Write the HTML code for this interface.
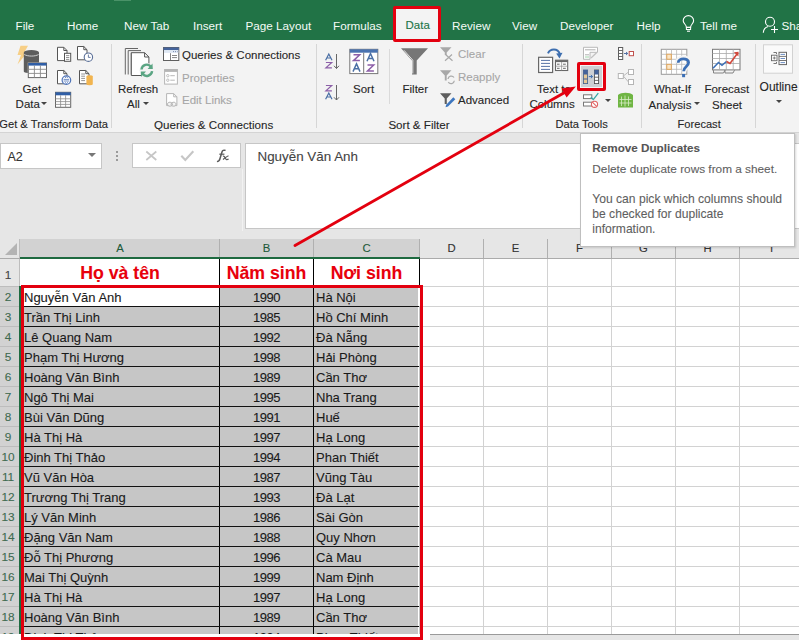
<!DOCTYPE html>
<html><head><meta charset="utf-8"><style>
html,body{margin:0;padding:0;width:799px;height:640px;overflow:hidden;background:#fff;position:relative}
.t{position:absolute;line-height:1;white-space:nowrap;font-family:"Liberation Sans", sans-serif;-webkit-text-stroke:0.1px currentColor}
svg{overflow:visible}
</style></head><body>
<div style="position:absolute;left:0px;top:0px;width:799px;height:40px;background:#217346"></div><div style="position:absolute;left:394px;top:7px;width:46px;height:35px;background:#f3f3f3"></div><div style="position:absolute;left:114px;top:0px;width:17px;height:1px;background:#4a9268"></div><div class="t" style="left:15.5px;top:19.8px;font-size:11.7px;color:#f4fbf6;font-weight:400;-webkit-text-stroke:0">File</div><div class="t" style="left:67.0px;top:19.8px;font-size:11.7px;color:#f4fbf6;font-weight:400;-webkit-text-stroke:0">Home</div><div class="t" style="left:124.0px;top:19.8px;font-size:11.7px;color:#f4fbf6;font-weight:400;-webkit-text-stroke:0">New Tab</div><div class="t" style="left:193.0px;top:19.8px;font-size:11.7px;color:#f4fbf6;font-weight:400;-webkit-text-stroke:0">Insert</div><div class="t" style="left:245.5px;top:19.8px;font-size:11.7px;color:#f4fbf6;font-weight:400;-webkit-text-stroke:0">Page Layout</div><div class="t" style="left:333.0px;top:19.8px;font-size:11.7px;color:#f4fbf6;font-weight:400;-webkit-text-stroke:0">Formulas</div><div class="t" style="left:452.0px;top:19.8px;font-size:11.7px;color:#f4fbf6;font-weight:400;-webkit-text-stroke:0">Review</div><div class="t" style="left:512.0px;top:19.8px;font-size:11.7px;color:#f4fbf6;font-weight:400;-webkit-text-stroke:0">View</div><div class="t" style="left:560.0px;top:19.8px;font-size:11.7px;color:#f4fbf6;font-weight:400;-webkit-text-stroke:0">Developer</div><div class="t" style="left:636.5px;top:19.8px;font-size:11.7px;color:#f4fbf6;font-weight:400;-webkit-text-stroke:0">Help</div><div class="t" style="left:700.0px;top:19.8px;font-size:11.7px;color:#f4fbf6;font-weight:400;-webkit-text-stroke:0">Tell me</div><div class="t" style="left:781.5px;top:19.8px;font-size:11.7px;color:#f4fbf6;font-weight:400;-webkit-text-stroke:0">Share</div><div class="t" style="left:405.5px;top:20.0px;font-size:11.5px;color:#217346;font-weight:400;">Data</div><div style="position:absolute;left:0px;top:40px;width:799px;height:92px;background:#f3f3f3"></div><div style="position:absolute;left:0px;top:132px;width:799px;height:1px;background:#d4d4d4"></div><div style="position:absolute;left:111px;top:44px;width:1px;height:84px;background:#d6d6d6"></div><div style="position:absolute;left:316px;top:44px;width:1px;height:84px;background:#d6d6d6"></div><div style="position:absolute;left:522px;top:44px;width:1px;height:84px;background:#d6d6d6"></div><div style="position:absolute;left:641px;top:44px;width:1px;height:84px;background:#d6d6d6"></div><div style="position:absolute;left:755px;top:44px;width:1px;height:84px;background:#d6d6d6"></div><div style="position:absolute;left:389px;top:49px;width:1px;height:55px;background:#dadada"></div><div class="t" style="left:22.6px;top:83.7px;font-size:11.5px;color:#262626;font-weight:400;">Get</div><div class="t" style="left:15.6px;top:99.0px;font-size:11.5px;color:#262626;font-weight:400;">Data</div><div class="t" style="left:118.0px;top:83.7px;font-size:11.5px;color:#262626;font-weight:400;">Refresh</div><div class="t" style="left:127.0px;top:99.0px;font-size:11.5px;color:#262626;font-weight:400;">All</div><div class="t" style="left:182.0px;top:50.0px;font-size:11.5px;color:#262626;font-weight:400;">Queries &amp; Connections</div><div class="t" style="left:182.0px;top:72.7px;font-size:11.5px;color:#a6a6a6;font-weight:400;">Properties</div><div class="t" style="left:182.0px;top:95.4px;font-size:11.5px;color:#a6a6a6;font-weight:400;">Edit Links</div><div class="t" style="left:353.0px;top:83.7px;font-size:11.5px;color:#262626;font-weight:400;">Sort</div><div class="t" style="left:402.5px;top:83.7px;font-size:11.5px;color:#262626;font-weight:400;">Filter</div><div class="t" style="left:458.0px;top:49.3px;font-size:11.5px;color:#a6a6a6;font-weight:400;">Clear</div><div class="t" style="left:458.0px;top:72.0px;font-size:11.5px;color:#a6a6a6;font-weight:400;">Reapply</div><div class="t" style="left:458.0px;top:95.4px;font-size:11.5px;color:#262626;font-weight:400;">Advanced</div><div class="t" style="left:537.0px;top:83.7px;font-size:11.5px;color:#262626;font-weight:400;">Text to</div><div class="t" style="left:529.4px;top:99.0px;font-size:11.5px;color:#262626;font-weight:400;">Columns</div><div class="t" style="left:654.0px;top:84.0px;font-size:11.5px;color:#262626;font-weight:400;">What-If</div><div class="t" style="left:648.6px;top:99.8px;font-size:11.5px;color:#262626;font-weight:400;">Analysis</div><div class="t" style="left:704.4px;top:84.0px;font-size:11.5px;color:#262626;font-weight:400;">Forecast</div><div class="t" style="left:712.0px;top:99.8px;font-size:11.5px;color:#262626;font-weight:400;">Sheet</div><div class="t" style="left:759.6px;top:81.3px;font-size:12px;color:#262626;font-weight:400;">Outline</div><div class="t" style="left:-0.8px;top:119.2px;font-size:11.2px;color:#262626;font-weight:400;">Get &amp; Transform Data</div><div class="t" style="left:154.0px;top:118.9px;font-size:11.6px;color:#262626;font-weight:400;">Queries &amp; Connections</div><div class="t" style="left:388.4px;top:118.9px;font-size:11.6px;color:#262626;font-weight:400;">Sort &amp; Filter</div><div class="t" style="left:555.6px;top:119.3px;font-size:11.1px;color:#262626;font-weight:400;">Data Tools</div><div class="t" style="left:677.6px;top:119.3px;font-size:11.1px;color:#262626;font-weight:400;">Forecast</div><svg style="position:absolute;left:41px;top:101.5px" width="6" height="4" viewBox="0 0 6 4"><path d="M0 0H6L3 3Z" fill="#444"/></svg><svg style="position:absolute;left:143px;top:101.5px" width="6" height="4" viewBox="0 0 6 4"><path d="M0 0H6L3 3Z" fill="#444"/></svg><svg style="position:absolute;left:693.5px;top:102px" width="6" height="4" viewBox="0 0 6 4"><path d="M0 0H6L3 3Z" fill="#444"/></svg><svg style="position:absolute;left:776px;top:99.5px" width="6" height="4" viewBox="0 0 6 4"><path d="M0 0H6L3 3Z" fill="#444"/></svg><svg style="position:absolute;left:604.5px;top:98.5px" width="6" height="4" viewBox="0 0 6 4"><path d="M0 0H6L3 3Z" fill="#444"/></svg><svg style="position:absolute;left:0;top:0" width="799" height="133" viewBox="0 0 799 133"><path d="M686.4 27.3 C686.4 24.5 683.2 23.5 683.2 20.8 A5.2 5.2 0 0 1 693.6 20.8 C693.6 23.5 690.6 24.5 690.6 27.3 Z" fill="none" stroke="#fff" stroke-width="1.1"/><rect x="686.4" y="27.4" width="4.2" height="2.1" fill="none" stroke="#fff" stroke-width="1"/><path d="M687 31.2H690" stroke="#fff" stroke-width="1.1"/><circle cx="770" cy="21.8" r="4.5" fill="none" stroke="#fff" stroke-width="1.1"/><path d="M763.3 32.8 C763.5 29.5 765.5 27.2 768.2 26.5" fill="none" stroke="#fff" stroke-width="1.1"/><path d="M771 29.5H778M774.5 26V33" stroke="#fff" stroke-width="1.1"/><path d="M20.5 45.8H28L24.5 52H27.5L17.5 64.5L21 55H17.5Z" fill="#f7cf86"/><path d="M23.8 52.5 A7.6 2.6 0 0 1 39 52.5 V62.5 H27.8 V73 C25.6 72.6 23.8 72 23.8 71.4Z" fill="#5d5d5d"/><path d="M24.2 54.5 C28 56.6 35 56.6 38.6 54.5" stroke="#dcdcdc" stroke-width="0.9" fill="none"/><rect x="28.3" y="63" width="18.2" height="14.6" fill="#fff" stroke="#666" stroke-width="1"/><rect x="28.3" y="63" width="18.2" height="2.6" fill="#2f5ea6"/><path d="M28.3 69.3H46.5M28.3 73.4H46.5M34.4 65.6V77.6M40.4 65.6V77.6" stroke="#8a8a8a" stroke-width="0.9"/><path d="M57.5 47.3H63.8L67.0 50.5V60.599999999999994H57.5Z" fill="#fff" stroke="#555" stroke-width="1.0"/><path d="M63.8 47.3V50.5H67.0" fill="none" stroke="#555" stroke-width="1.0"/><rect x="64.5" y="53.3" width="6.2" height="8" fill="#fff" stroke="#555" stroke-width="1"/><path d="M66 55.6H69.3M66 57.5H69.3M66 59.4H69.3" stroke="#666" stroke-width="0.7"/><path d="M77.5 46.5H83.8L87.0 49.7V59.8H77.5Z" fill="#fff" stroke="#555" stroke-width="1.0"/><path d="M83.8 46.5V49.7H87.0" fill="none" stroke="#555" stroke-width="1.0"/><circle cx="88.4" cy="57.2" r="4.2" fill="#fff" stroke="#5a6f98" stroke-width="1.1"/><path d="M88.4 54.6V57.4H90.6" stroke="#5a6f98" stroke-width="0.9" fill="none"/><path d="M57.5 70.5H63.8L67.0 73.7V83.8H57.5Z" fill="#fff" stroke="#555" stroke-width="1.0"/><path d="M63.8 70.5V73.7H67.0" fill="none" stroke="#555" stroke-width="1.0"/><circle cx="66.4" cy="80.1" r="4.3" fill="#fff" stroke="#4f74b8" stroke-width="1.2"/><path d="M63.6 79.4H69.2M63.6 81H69.2M64.9 78.1L66.4 76.6L67.9 78.1M64.9 82.2L66.4 83.6L67.9 82.2" stroke="#4f74b8" stroke-width="0.8" fill="none"/><path d="M79.5 70.5H85.8L89.0 73.7V83.8H79.5Z" fill="#fff" stroke="#555" stroke-width="1.0"/><path d="M85.8 70.5V73.7H89.0" fill="none" stroke="#555" stroke-width="1.0"/><path d="M81.2 74H85M81.2 76.2H85M81.2 78.4H85M81.2 80.6H85" stroke="#666" stroke-width="0.7"/><path d="M86.4 76.5 A3.2 1.2 0 0 1 92.8 76.5 V84 A3.2 1.2 0 0 1 86.4 84Z" fill="#f1b44f"/><rect x="55.5" y="92.3" width="15.2" height="15" fill="#fff" stroke="#666" stroke-width="1"/><rect x="55.5" y="92.3" width="15.2" height="3" fill="#2f5ea6"/><path d="M55.5 98.8H70.7M55.5 101.6H70.7M55.5 104.4H70.7M60.6 95.3V107.3M65.6 95.3V107.3" stroke="#8a8a8a" stroke-width="0.8"/><path d="M125.3 74.5V48.5H138M128.2 74.5V50.6H141M131.3 74.5V52.7" fill="none" stroke="#666" stroke-width="1"/><path d="M131.3 52.7H144.6L148.9 57V75.5H131.3Z" fill="#fff" stroke="#555" stroke-width="1"/><path d="M144.6 52.7V57H148.9" fill="none" stroke="#555" stroke-width="1"/><circle cx="146.8" cy="70.3" r="7.4" fill="#f3f3f3"/><path d="M141.5 69.5 A5.3 5.3 0 0 1 151 66.8" fill="none" stroke="#5aa583" stroke-width="2.4"/><path d="M152.5 63.5L152.8 69H147.6Z" fill="#5aa583"/><path d="M152.1 71.2 A5.3 5.3 0 0 1 142.6 73.8" fill="none" stroke="#5aa583" stroke-width="2.4"/><path d="M141 77L140.8 71.6H146Z" fill="#5aa583"/><rect x="163.5" y="47.5" width="15.3" height="13" fill="#fff" stroke="#5f5f5f" stroke-width="1"/><rect x="163.5" y="47.5" width="15.3" height="2.7" fill="#44639b"/><rect x="164" y="50.3" width="14.3" height="2.6" fill="#dfe8f4"/><path d="M170.5 53.2V60.5M172 55.5H177M172 57.6H177" stroke="#666" stroke-width="0.8"/><path d="M173 51.6H174M175 51.6H176M177 51.6H177.6" stroke="#5a6f98" stroke-width="0.8"/><rect x="164.6" y="69.5" width="12.8" height="14.6" fill="#fff" stroke="#b5b5b5" stroke-width="1"/><rect x="164.6" y="69.5" width="12.8" height="2.4" fill="#b5b5b5"/><circle cx="167.8" cy="75.7" r="1.2" fill="none" stroke="#b0b0b0" stroke-width="0.8"/><circle cx="167.8" cy="80.2" r="1.2" fill="none" stroke="#b0b0b0" stroke-width="0.8"/><path d="M170.3 75.7H174.8M170.3 80.2H174.8" stroke="#b0b0b0" stroke-width="0.9"/><path d="M166.6 93.6H173.70000000000002L176.9 96.8V105.6H166.6Z" fill="#fff" stroke="#b5b5b5" stroke-width="1.0"/><path d="M173.70000000000002 93.6V96.8H176.9" fill="none" stroke="#b5b5b5" stroke-width="1.0"/><path d="M167.5 104.2 C167.5 101.6 172 101.6 172.5 104.2 C172 106.8 167.5 106.8 167.5 104.2M171 104.2 C171.5 101.6 176 101.6 176 104.2 C176 106.8 171.5 106.8 171 104.2" fill="#f3f3f3" stroke="#b0b0b0" stroke-width="1"/><path d="M325.6 60.3L328.8 54L332.0 60.3M326.8 58H330.8" fill="none" stroke="#4a6fa5" stroke-width="1.2"/><path d="M325.90000000000003 62.5H331.70000000000005L325.90000000000003 67.8H331.90000000000003" fill="none" stroke="#8c5fa8" stroke-width="1.2"/><path d="M336.5 54V68.5M334 65.8L336.5 68.5L339 65.8" fill="none" stroke="#666" stroke-width="1"/><path d="M325.90000000000003 85.5H331.70000000000005L325.90000000000003 90.8H331.90000000000003" fill="none" stroke="#8c5fa8" stroke-width="1.2"/><path d="M325.6 99.3L328.8 93L332.0 99.3M326.8 97H330.8" fill="none" stroke="#4a6fa5" stroke-width="1.2"/><path d="M336.5 85V100M334 97.3L336.5 100L339 97.3" fill="none" stroke="#666" stroke-width="1"/><rect x="349.8" y="49.3" width="28" height="24.3" fill="#fff" stroke="#777" stroke-width="1"/><rect x="349.8" y="49.3" width="28" height="3.4" fill="#4a73b0"/><path d="M363.7 52.7V73.6" stroke="#777" stroke-width="1"/><path d="M353.5 54.7H359.7L353.5 60.6H359.9" fill="none" stroke="#8c5fa8" stroke-width="1.5"/><path d="M353 71.6L356.5 63.8L360 71.6M354.4 68.8H358.6" fill="none" stroke="#4a6fa5" stroke-width="1.5"/><path d="M367 61.3L370.5 53.5L374 61.3M368.4 58.5H372.6" fill="none" stroke="#4a6fa5" stroke-width="1.5"/><path d="M367.5 65.0H373.7L367.5 70.89999999999999H373.9" fill="none" stroke="#8c5fa8" stroke-width="1.5"/><path d="M401 48.3H428L416.7 60.6V74.4H412V60.6Z" fill="#767676"/><path d="M404 50.3L412.8 60.2V73.5" fill="none" stroke="#fff" stroke-width="0.8"/><path d="M440 47.2H451.5L446.7 52.5V55H444.8V52.5Z" fill="#a8a8a8"/><path d="M445.5 54.5L452.5 60.8M452 54.5L445 60.8" stroke="#a8a8a8" stroke-width="1.2"/><path d="M440 70.3H451.5L446.7 75.5V80.5H444.8V75.5Z" fill="#a8a8a8"/><path d="M448 79 A3.3 3.3 0 0 1 454 77.5M454.3 80.7 A3.3 3.3 0 0 1 448.3 82.2" fill="none" stroke="#ababab" stroke-width="1.3"/><path d="M440 93.2H451.5L446.8 98.5V104H444.7V98.5Z" fill="#5e5e5e"/><path d="M453.3 97.2L455.3 99.2L448 106.5L445.5 107.3L446.2 104.8Z" fill="#3d76bf"/><rect x="538.6" y="57.3" width="14" height="15.2" fill="#fff" stroke="#686868" stroke-width="1.2"/><path d="M541 60.4H550M541 63.4H550M541 66.4H550M541 69.4H550" stroke="#44639b" stroke-width="0.9"/><rect x="555.5" y="60.2" width="12.2" height="10.3" fill="#fff" stroke="#686868" stroke-width="1.1"/><rect x="555.5" y="60.2" width="12.2" height="1.9" fill="#686868"/><path d="M561.6 62V70.5M555.5 66.2H567.7" stroke="#8a8a8a" stroke-width="0.7"/><path d="M557 64.2H559.6M563 64.2H565.8M557 68.3H559.6M563 68.3H565.8" stroke="#555" stroke-width="0.9"/><path d="M548 53.3 C550 48.5 557.5 47.5 560 54" fill="none" stroke="#3e6fb0" stroke-width="2"/><path d="M556.2 53.5L559.5 58.4L562.5 52.8Z" fill="#3e6fb0"/><path d="M583.5 47.3H597.5V52.3H590V59.3H583.5Z" fill="#fff" stroke="#b8b8b8" stroke-width="1"/><path d="M585 49.8H595.5M585 54.8H589" stroke="#b0b0b0" stroke-width="1"/><path d="M585 57H589" stroke="#9fd4a8" stroke-width="1"/><path d="M591 58L596.8 52.5" stroke="#c0c0c0" stroke-width="1.2"/><rect x="580" y="65" width="23" height="23" fill="#f4f4f4"/><rect x="581" y="66" width="21" height="21" fill="#cdd0d4"/><rect x="583.4" y="70" width="4.2" height="13.6" fill="#e6c896" stroke="#3f5f8a" stroke-width="0.8"/><rect x="583.4" y="70" width="4.2" height="4.5" fill="#44639b"/><rect x="583.4" y="78.5" width="4.2" height="1" fill="#44639b"/><rect x="594.4" y="70" width="4.2" height="13.6" fill="#fff" stroke="#4a4a4a" stroke-width="0.8"/><rect x="594.4" y="70" width="4.2" height="4.5" fill="#44639b"/><path d="M594.4 77.2H598.6M594.4 80.4H598.6" stroke="#4a4a4a" stroke-width="0.8"/><path d="M588.8 76.6H592.3M590.9 75L592.6 76.6L590.9 78.2" fill="none" stroke="#3e6fb0" stroke-width="1"/><rect x="583.5" y="94.8" width="8.3" height="3.8" fill="#fff" stroke="#777" stroke-width="1"/><rect x="583.5" y="102.2" width="8.3" height="3.8" fill="#fff" stroke="#777" stroke-width="1"/><path d="M590.8 97.3L593.3 99.6L598.3 93.2" fill="none" stroke="#38a6a6" stroke-width="1.3"/><circle cx="594.5" cy="104.3" r="3.1" fill="#fff" stroke="#e06464" stroke-width="1.1"/><path d="M592.4 102.2L596.6 106.4" stroke="#e06464" stroke-width="1.1"/><rect x="618.5" y="47.5" width="4.2" height="12" fill="#fff" stroke="#5e5e5e" stroke-width="1"/><path d="M618.5 50.5H622.7M618.5 53.5H622.7M618.5 56.5H622.7" stroke="#5e5e5e" stroke-width="0.9"/><path d="M624 53.5H627.5M626 52L627.7 53.5L626 55" fill="none" stroke="#44639b" stroke-width="0.9"/><rect x="629.2" y="51.5" width="4.3" height="4.2" fill="#fff" stroke="#c0504d" stroke-width="1"/><rect x="618.3" y="73.5" width="5" height="5" fill="#fff" stroke="#b5b5b5" stroke-width="1"/><rect x="628.5" y="69.5" width="5" height="5" fill="#fff" stroke="#b5b5b5" stroke-width="1"/><rect x="628.5" y="79.5" width="5" height="5" fill="#fff" stroke="#b5b5b5" stroke-width="1"/><path d="M623.3 76L628.5 72M623.3 76L628.5 82" stroke="#b5b5b5" stroke-width="0.9"/><path d="M618 95 C621 92 630 92 633 95 V107.5 H618Z" fill="#6fb543"/><path d="M621.5 96.5V106M625 95.5V106.5M628.5 96.5V106M619.5 99.5H631.5M619.5 103H631.5" stroke="#d9ecc8" stroke-width="0.8"/><rect x="661.3" y="49.3" width="25.5" height="25" fill="#fff" stroke="#9a9a9a" stroke-width="1"/><path d="M666.4 49.3V74.3M671.5 49.3V74.3M676.6 49.3V74.3M681.7 49.3V74.3M661.3 54.3H686.8M661.3 59.3H686.8M661.3 64.3H686.8M661.3 69.3H686.8" stroke="#b8b8b8" stroke-width="0.8"/><rect x="666.8" y="54.2" width="4.5" height="5" fill="#fbe6c6" stroke="#e0a050" stroke-width="0.9"/><rect x="666.8" y="64.3" width="4.5" height="5" fill="#fbe6c6" stroke="#e0a050" stroke-width="0.9"/><path d="M677.5 63 C677.3 56.5 689.5 56.5 689.5 62.5 C689.5 66.5 684 66.5 684 71.5" fill="none" stroke="#f3f3f3" stroke-width="5"/><path d="M678.2 62.8 C678.2 57.6 688.6 57.6 688.6 62.6 C688.6 66.3 683.6 66.8 683.6 71.3" fill="none" stroke="#3b6fb6" stroke-width="2.8"/><rect x="682.1" y="74" width="3" height="3.2" fill="#3b6fb6"/><rect x="712.5" y="49.3" width="27.5" height="20.6" fill="#fff" stroke="#777" stroke-width="1"/><path d="M712.5 53.5H740M712.5 58.5H740M712.5 63.5H740M719.5 49.3V69.9M726.3 49.3V69.9M733.2 49.3V69.9" stroke="#aaa" stroke-width="0.8"/><path d="M713.5 70.2V73H723.5L725 70.2M725 70.2V73H733L734.5 70.2" fill="none" stroke="#777" stroke-width="0.9"/><path d="M713 68.2L718.5 62.5L722 65.3L726.5 61.5" fill="none" stroke="#3b6fb6" stroke-width="1.6"/><path d="M726.5 61.5L730 63.5L737 54" fill="none" stroke="#d2483b" stroke-width="1.6"/><path d="M733.8 52.2L738.6 51.8L738.4 56.6Z" fill="#d2483b"/><rect x="763.5" y="44.8" width="29" height="28.4" fill="#fafafa" stroke="#d2d2d2" stroke-width="1"/><rect x="771.5" y="55.2" width="5.5" height="5.5" fill="#fff" stroke="#666" stroke-width="0.9"/><path d="M772.8 58H775.8M774.3 56.5V59.5" stroke="#666" stroke-width="0.8"/><path d="M773.5 52.5H776.5V54M773.5 63.5H776.5V62" fill="none" stroke="#666" stroke-width="0.9"/><rect x="779" y="52.3" width="7.5" height="12.3" fill="#fff" stroke="#666" stroke-width="1"/><path d="M779 56.4H786.5M779 60.5H786.5" stroke="#666" stroke-width="0.9"/><path d="M780.5 54.4H785M780.5 58.5H785M780.5 62.6H785" stroke="#6d8fc4" stroke-width="1"/></svg><div style="position:absolute;left:0px;top:133px;width:799px;height:106px;background:#e6e6e6"></div><div style="position:absolute;left:0px;top:143px;width:102px;height:26px;background:#fff;border:1px solid #c6c6c6;box-sizing:border-box"></div><div class="t" style="left:7.5px;top:150.9px;font-size:12.5px;color:#333;font-weight:400;">A2</div><svg style="position:absolute;left:88px;top:153px" width="8" height="5" viewBox="0 0 8 5"><path d="M0 0H8L4 4Z" fill="#777"/></svg><div style="position:absolute;left:116px;top:151px;width:2px;height:2px;background:#9a9a9a"></div><div style="position:absolute;left:116px;top:155px;width:2px;height:2px;background:#9a9a9a"></div><div style="position:absolute;left:116px;top:159px;width:2px;height:2px;background:#9a9a9a"></div><div style="position:absolute;left:132px;top:143px;width:109px;height:25px;background:#fff;border:1px solid #c6c6c6;box-sizing:border-box"></div><svg style="position:absolute;left:145px;top:149px" width="13" height="13" viewBox="0 0 13 13"><path d="M1.3 2.5L11.3 11M11.3 2.5L1.3 11" stroke="#c6c6c6" stroke-width="1.7"/></svg><svg style="position:absolute;left:180px;top:149px" width="15" height="13" viewBox="0 0 15 13"><path d="M1.3 6.8L5.3 11L13.3 2.3" stroke="#c6c6c6" stroke-width="2.1" fill="none"/></svg><svg style="position:absolute;left:0px;top:0px" width="799" height="640" viewBox="0 0 799 640"><path d="M217 161.3 C218.8 161.8 219.7 160.2 220.4 157.3 L221.9 152.2 C222.4 150.4 223.7 149.8 225.6 150.4" stroke="#5a5a5a" stroke-width="1.5" fill="none"/><path d="M219.3 154.2H224.4" stroke="#5a5a5a" stroke-width="1.2"/><path d="M222.8 156.2 C224.6 155.2 225 158.6 226.3 159.4 C227 159.8 227.8 159.5 228.6 159 M223 159.5 C224.5 158.5 226.5 156.5 228.5 155.8" stroke="#5a5a5a" stroke-width="1.2" fill="none"/></svg><div style="position:absolute;left:242px;top:169px;width:1px;height:62px;background:#f2f2f2"></div><div style="position:absolute;left:245px;top:143px;width:560px;height:86px;background:#fff;border:1px solid #c6c6c6;box-sizing:border-box"></div><div class="t" style="left:257.5px;top:149.7px;font-size:13.4px;color:#444;font-weight:400;">Nguyễn Văn Anh</div><div style="position:absolute;left:0px;top:239px;width:799px;height:19px;background:#e6e6e6"></div><div style="position:absolute;left:20px;top:239px;width:400px;height:19px;background:#d2d2d2"></div><div style="position:absolute;left:219px;top:239px;width:1px;height:19px;background:#b0b0b0"></div><div class="t" style="left:-80.0px;width:400px;text-align:center;top:243.4px;font-size:11.3px;color:#215a3a;font-weight:400;">A</div><div style="position:absolute;left:313px;top:239px;width:1px;height:19px;background:#b0b0b0"></div><div class="t" style="left:66.5px;width:400px;text-align:center;top:243.4px;font-size:11.3px;color:#215a3a;font-weight:400;">B</div><div style="position:absolute;left:419px;top:239px;width:1px;height:19px;background:#b0b0b0"></div><div class="t" style="left:166.5px;width:400px;text-align:center;top:243.4px;font-size:11.3px;color:#215a3a;font-weight:400;">C</div><div style="position:absolute;left:483px;top:239px;width:1px;height:19px;background:#b0b0b0"></div><div class="t" style="left:251.5px;width:400px;text-align:center;top:243.4px;font-size:11.3px;color:#333;font-weight:400;">D</div><div style="position:absolute;left:547px;top:239px;width:1px;height:19px;background:#b0b0b0"></div><div class="t" style="left:315.5px;width:400px;text-align:center;top:243.4px;font-size:11.3px;color:#333;font-weight:400;">E</div><div style="position:absolute;left:611px;top:239px;width:1px;height:19px;background:#b0b0b0"></div><div class="t" style="left:379.5px;width:400px;text-align:center;top:243.4px;font-size:11.3px;color:#333;font-weight:400;">F</div><div style="position:absolute;left:675px;top:239px;width:1px;height:19px;background:#b0b0b0"></div><div class="t" style="left:443.5px;width:400px;text-align:center;top:243.4px;font-size:11.3px;color:#333;font-weight:400;">G</div><div style="position:absolute;left:739px;top:239px;width:1px;height:19px;background:#b0b0b0"></div><div class="t" style="left:507.5px;width:400px;text-align:center;top:243.4px;font-size:11.3px;color:#333;font-weight:400;">H</div><div style="position:absolute;left:803px;top:239px;width:1px;height:19px;background:#b0b0b0"></div><div class="t" style="left:571.5px;width:400px;text-align:center;top:243.4px;font-size:11.3px;color:#333;font-weight:400;">I</div><div style="position:absolute;left:419px;top:258px;width:380px;height:1px;background:#ababab"></div><div style="position:absolute;left:20px;top:257px;width:400px;height:2px;background:#1e6a40"></div><div style="position:absolute;left:0px;top:258px;width:20px;height:1px;background:#ababab"></div><div style="position:absolute;left:19px;top:239px;width:1px;height:19px;background:#bdbdbd"></div><svg style="position:absolute;left:5px;top:243px" width="13" height="12" viewBox="0 0 13 12"><path d="M12 0V12H0Z" fill="#b4b4b4"/></svg><div style="position:absolute;left:0px;top:259px;width:799px;height:381px;background:#fff"></div><div style="position:absolute;left:0px;top:259px;width:20px;height:375px;background:#e6e6e6"></div><div style="position:absolute;left:0px;top:287px;width:20px;height:347px;background:#d2d2d2"></div><div style="position:absolute;left:0px;top:286px;width:20px;height:1px;background:#bdbdbd"></div><div style="position:absolute;left:19px;top:259px;width:1px;height:27px;background:#bdbdbd"></div><div class="t" style="left:-192.0px;width:400px;text-align:center;top:270.0px;font-size:11.8px;color:#444;font-weight:400;">1</div><div style="position:absolute;left:0px;top:306px;width:19px;height:1px;background:#bdbdbd"></div><div class="t" style="left:-192.0px;width:400px;text-align:center;top:292.0px;font-size:11.8px;color:#3f6a50;font-weight:400;">2</div><div style="position:absolute;left:0px;top:326px;width:19px;height:1px;background:#bdbdbd"></div><div class="t" style="left:-192.0px;width:400px;text-align:center;top:312.0px;font-size:11.8px;color:#3f6a50;font-weight:400;">3</div><div style="position:absolute;left:0px;top:346px;width:19px;height:1px;background:#bdbdbd"></div><div class="t" style="left:-192.0px;width:400px;text-align:center;top:332.0px;font-size:11.8px;color:#3f6a50;font-weight:400;">4</div><div style="position:absolute;left:0px;top:366px;width:19px;height:1px;background:#bdbdbd"></div><div class="t" style="left:-192.0px;width:400px;text-align:center;top:352.0px;font-size:11.8px;color:#3f6a50;font-weight:400;">5</div><div style="position:absolute;left:0px;top:386px;width:19px;height:1px;background:#bdbdbd"></div><div class="t" style="left:-192.0px;width:400px;text-align:center;top:372.0px;font-size:11.8px;color:#3f6a50;font-weight:400;">6</div><div style="position:absolute;left:0px;top:406px;width:19px;height:1px;background:#bdbdbd"></div><div class="t" style="left:-192.0px;width:400px;text-align:center;top:392.0px;font-size:11.8px;color:#3f6a50;font-weight:400;">7</div><div style="position:absolute;left:0px;top:426px;width:19px;height:1px;background:#bdbdbd"></div><div class="t" style="left:-192.0px;width:400px;text-align:center;top:412.0px;font-size:11.8px;color:#3f6a50;font-weight:400;">8</div><div style="position:absolute;left:0px;top:446px;width:19px;height:1px;background:#bdbdbd"></div><div class="t" style="left:-192.0px;width:400px;text-align:center;top:432.0px;font-size:11.8px;color:#3f6a50;font-weight:400;">9</div><div style="position:absolute;left:0px;top:466px;width:19px;height:1px;background:#bdbdbd"></div><div class="t" style="left:-192.0px;width:400px;text-align:center;top:452.0px;font-size:11.8px;color:#3f6a50;font-weight:400;">10</div><div style="position:absolute;left:0px;top:486px;width:19px;height:1px;background:#bdbdbd"></div><div class="t" style="left:-192.0px;width:400px;text-align:center;top:472.0px;font-size:11.8px;color:#3f6a50;font-weight:400;">11</div><div style="position:absolute;left:0px;top:506px;width:19px;height:1px;background:#bdbdbd"></div><div class="t" style="left:-192.0px;width:400px;text-align:center;top:492.0px;font-size:11.8px;color:#3f6a50;font-weight:400;">12</div><div style="position:absolute;left:0px;top:526px;width:19px;height:1px;background:#bdbdbd"></div><div class="t" style="left:-192.0px;width:400px;text-align:center;top:512.0px;font-size:11.8px;color:#3f6a50;font-weight:400;">13</div><div style="position:absolute;left:0px;top:546px;width:19px;height:1px;background:#bdbdbd"></div><div class="t" style="left:-192.0px;width:400px;text-align:center;top:532.0px;font-size:11.8px;color:#3f6a50;font-weight:400;">14</div><div style="position:absolute;left:0px;top:566px;width:19px;height:1px;background:#bdbdbd"></div><div class="t" style="left:-192.0px;width:400px;text-align:center;top:552.0px;font-size:11.8px;color:#3f6a50;font-weight:400;">15</div><div style="position:absolute;left:0px;top:586px;width:19px;height:1px;background:#bdbdbd"></div><div class="t" style="left:-192.0px;width:400px;text-align:center;top:572.0px;font-size:11.8px;color:#3f6a50;font-weight:400;">16</div><div style="position:absolute;left:0px;top:606px;width:19px;height:1px;background:#bdbdbd"></div><div class="t" style="left:-192.0px;width:400px;text-align:center;top:592.0px;font-size:11.8px;color:#3f6a50;font-weight:400;">17</div><div style="position:absolute;left:0px;top:626px;width:19px;height:1px;background:#bdbdbd"></div><div class="t" style="left:-192.0px;width:400px;text-align:center;top:612.0px;font-size:11.8px;color:#3f6a50;font-weight:400;">18</div><div style="position:absolute;left:0px;top:646px;width:19px;height:1px;background:#bdbdbd"></div><div class="t" style="left:-192.0px;width:400px;text-align:center;top:632.0px;font-size:11.8px;color:#3f6a50;font-weight:400;">19</div><div style="position:absolute;left:483px;top:259px;width:1px;height:375px;background:#d2d2d2"></div><div style="position:absolute;left:547px;top:259px;width:1px;height:375px;background:#d2d2d2"></div><div style="position:absolute;left:611px;top:259px;width:1px;height:375px;background:#d2d2d2"></div><div style="position:absolute;left:675px;top:259px;width:1px;height:375px;background:#d2d2d2"></div><div style="position:absolute;left:739px;top:259px;width:1px;height:375px;background:#d2d2d2"></div><div style="position:absolute;left:803px;top:259px;width:1px;height:375px;background:#d2d2d2"></div><div style="position:absolute;left:420px;top:286px;width:379px;height:1px;background:#d2d2d2"></div><div style="position:absolute;left:420px;top:306px;width:379px;height:1px;background:#d2d2d2"></div><div style="position:absolute;left:420px;top:326px;width:379px;height:1px;background:#d2d2d2"></div><div style="position:absolute;left:420px;top:346px;width:379px;height:1px;background:#d2d2d2"></div><div style="position:absolute;left:420px;top:366px;width:379px;height:1px;background:#d2d2d2"></div><div style="position:absolute;left:420px;top:386px;width:379px;height:1px;background:#d2d2d2"></div><div style="position:absolute;left:420px;top:406px;width:379px;height:1px;background:#d2d2d2"></div><div style="position:absolute;left:420px;top:426px;width:379px;height:1px;background:#d2d2d2"></div><div style="position:absolute;left:420px;top:446px;width:379px;height:1px;background:#d2d2d2"></div><div style="position:absolute;left:420px;top:466px;width:379px;height:1px;background:#d2d2d2"></div><div style="position:absolute;left:420px;top:486px;width:379px;height:1px;background:#d2d2d2"></div><div style="position:absolute;left:420px;top:506px;width:379px;height:1px;background:#d2d2d2"></div><div style="position:absolute;left:420px;top:526px;width:379px;height:1px;background:#d2d2d2"></div><div style="position:absolute;left:420px;top:546px;width:379px;height:1px;background:#d2d2d2"></div><div style="position:absolute;left:420px;top:566px;width:379px;height:1px;background:#d2d2d2"></div><div style="position:absolute;left:420px;top:586px;width:379px;height:1px;background:#d2d2d2"></div><div style="position:absolute;left:420px;top:606px;width:379px;height:1px;background:#d2d2d2"></div><div style="position:absolute;left:420px;top:626px;width:379px;height:1px;background:#d2d2d2"></div><div style="position:absolute;left:20px;top:306px;width:400px;height:328px;background:#c6c6c6"></div><div style="position:absolute;left:20px;top:287px;width:200px;height:19px;background:#fff"></div><div style="position:absolute;left:219px;top:287px;width:200px;height:19px;background:#c6c6c6"></div><div style="position:absolute;left:219px;top:259px;width:1px;height:375px;background:#000"></div><div style="position:absolute;left:313px;top:259px;width:1px;height:375px;background:#000"></div><div style="position:absolute;left:419px;top:259px;width:1px;height:27px;background:#000"></div><div style="position:absolute;left:418px;top:287px;width:1px;height:347px;background:#fff"></div><div style="position:absolute;left:19px;top:286px;width:3px;height:348px;background:#1e6a40"></div><div style="position:absolute;left:21px;top:286px;width:398px;height:1px;background:#111"></div><div style="position:absolute;left:21px;top:306px;width:398px;height:1px;background:#111"></div><div style="position:absolute;left:21px;top:326px;width:398px;height:1px;background:#111"></div><div style="position:absolute;left:21px;top:346px;width:398px;height:1px;background:#111"></div><div style="position:absolute;left:21px;top:366px;width:398px;height:1px;background:#111"></div><div style="position:absolute;left:21px;top:386px;width:398px;height:1px;background:#111"></div><div style="position:absolute;left:21px;top:406px;width:398px;height:1px;background:#111"></div><div style="position:absolute;left:21px;top:426px;width:398px;height:1px;background:#111"></div><div style="position:absolute;left:21px;top:446px;width:398px;height:1px;background:#111"></div><div style="position:absolute;left:21px;top:466px;width:398px;height:1px;background:#111"></div><div style="position:absolute;left:21px;top:486px;width:398px;height:1px;background:#111"></div><div style="position:absolute;left:21px;top:506px;width:398px;height:1px;background:#111"></div><div style="position:absolute;left:21px;top:526px;width:398px;height:1px;background:#111"></div><div style="position:absolute;left:21px;top:546px;width:398px;height:1px;background:#111"></div><div style="position:absolute;left:21px;top:566px;width:398px;height:1px;background:#111"></div><div style="position:absolute;left:21px;top:586px;width:398px;height:1px;background:#111"></div><div style="position:absolute;left:21px;top:606px;width:398px;height:1px;background:#111"></div><div style="position:absolute;left:21px;top:626px;width:398px;height:1px;background:#111"></div><div class="t" style="left:-80.0px;width:400px;text-align:center;top:264.5px;font-size:17.7px;color:#e8000b;font-weight:700;">Họ và tên</div><div class="t" style="left:66.5px;width:400px;text-align:center;top:264.5px;font-size:17.7px;color:#e8000b;font-weight:700;">Năm sinh</div><div class="t" style="left:166.5px;width:400px;text-align:center;top:264.5px;font-size:17.7px;color:#e8000b;font-weight:700;">Nơi sinh</div><div style="position:absolute;left:0;top:0;width:799px;height:634px;overflow:hidden"><div class="t" style="left:24.0px;top:291.0px;font-size:13px;color:#1a1a1a;font-weight:400;">Nguyễn Văn Anh</div><div class="t" style="left:66.5px;width:400px;text-align:center;top:291.0px;font-size:13px;color:#1a1a1a;font-weight:400;letter-spacing:-0.5px">1990</div><div class="t" style="left:316.0px;top:291.0px;font-size:13px;color:#1a1a1a;font-weight:400;">Hà Nội</div><div class="t" style="left:24.0px;top:311.0px;font-size:13px;color:#1a1a1a;font-weight:400;">Trần Thị Linh</div><div class="t" style="left:66.5px;width:400px;text-align:center;top:311.0px;font-size:13px;color:#1a1a1a;font-weight:400;letter-spacing:-0.5px">1985</div><div class="t" style="left:316.0px;top:311.0px;font-size:13px;color:#1a1a1a;font-weight:400;">Hồ Chí Minh</div><div class="t" style="left:24.0px;top:331.0px;font-size:13px;color:#1a1a1a;font-weight:400;">Lê Quang Nam</div><div class="t" style="left:66.5px;width:400px;text-align:center;top:331.0px;font-size:13px;color:#1a1a1a;font-weight:400;letter-spacing:-0.5px">1992</div><div class="t" style="left:316.0px;top:331.0px;font-size:13px;color:#1a1a1a;font-weight:400;">Đà Nẵng</div><div class="t" style="left:24.0px;top:351.0px;font-size:13px;color:#1a1a1a;font-weight:400;">Phạm Thị Hương</div><div class="t" style="left:66.5px;width:400px;text-align:center;top:351.0px;font-size:13px;color:#1a1a1a;font-weight:400;letter-spacing:-0.5px">1998</div><div class="t" style="left:316.0px;top:351.0px;font-size:13px;color:#1a1a1a;font-weight:400;">Hải Phòng</div><div class="t" style="left:24.0px;top:371.0px;font-size:13px;color:#1a1a1a;font-weight:400;">Hoàng Văn Bình</div><div class="t" style="left:66.5px;width:400px;text-align:center;top:371.0px;font-size:13px;color:#1a1a1a;font-weight:400;letter-spacing:-0.5px">1989</div><div class="t" style="left:316.0px;top:371.0px;font-size:13px;color:#1a1a1a;font-weight:400;">Cần Thơ</div><div class="t" style="left:24.0px;top:391.0px;font-size:13px;color:#1a1a1a;font-weight:400;">Ngô Thị Mai</div><div class="t" style="left:66.5px;width:400px;text-align:center;top:391.0px;font-size:13px;color:#1a1a1a;font-weight:400;letter-spacing:-0.5px">1995</div><div class="t" style="left:316.0px;top:391.0px;font-size:13px;color:#1a1a1a;font-weight:400;">Nha Trang</div><div class="t" style="left:24.0px;top:411.0px;font-size:13px;color:#1a1a1a;font-weight:400;">Bùi Văn Dũng</div><div class="t" style="left:66.5px;width:400px;text-align:center;top:411.0px;font-size:13px;color:#1a1a1a;font-weight:400;letter-spacing:-0.5px">1991</div><div class="t" style="left:316.0px;top:411.0px;font-size:13px;color:#1a1a1a;font-weight:400;">Huế</div><div class="t" style="left:24.0px;top:431.0px;font-size:13px;color:#1a1a1a;font-weight:400;">Hà Thị Hà</div><div class="t" style="left:66.5px;width:400px;text-align:center;top:431.0px;font-size:13px;color:#1a1a1a;font-weight:400;letter-spacing:-0.5px">1997</div><div class="t" style="left:316.0px;top:431.0px;font-size:13px;color:#1a1a1a;font-weight:400;">Hạ Long</div><div class="t" style="left:24.0px;top:451.0px;font-size:13px;color:#1a1a1a;font-weight:400;">Đinh Thị Thảo</div><div class="t" style="left:66.5px;width:400px;text-align:center;top:451.0px;font-size:13px;color:#1a1a1a;font-weight:400;letter-spacing:-0.5px">1994</div><div class="t" style="left:316.0px;top:451.0px;font-size:13px;color:#1a1a1a;font-weight:400;">Phan Thiết</div><div class="t" style="left:24.0px;top:471.0px;font-size:13px;color:#1a1a1a;font-weight:400;">Vũ Văn Hòa</div><div class="t" style="left:66.5px;width:400px;text-align:center;top:471.0px;font-size:13px;color:#1a1a1a;font-weight:400;letter-spacing:-0.5px">1987</div><div class="t" style="left:316.0px;top:471.0px;font-size:13px;color:#1a1a1a;font-weight:400;">Vũng Tàu</div><div class="t" style="left:24.0px;top:491.0px;font-size:13px;color:#1a1a1a;font-weight:400;">Trương Thị Trang</div><div class="t" style="left:66.5px;width:400px;text-align:center;top:491.0px;font-size:13px;color:#1a1a1a;font-weight:400;letter-spacing:-0.5px">1993</div><div class="t" style="left:316.0px;top:491.0px;font-size:13px;color:#1a1a1a;font-weight:400;">Đà Lạt</div><div class="t" style="left:24.0px;top:511.0px;font-size:13px;color:#1a1a1a;font-weight:400;">Lý Văn Minh</div><div class="t" style="left:66.5px;width:400px;text-align:center;top:511.0px;font-size:13px;color:#1a1a1a;font-weight:400;letter-spacing:-0.5px">1986</div><div class="t" style="left:316.0px;top:511.0px;font-size:13px;color:#1a1a1a;font-weight:400;">Sài Gòn</div><div class="t" style="left:24.0px;top:531.0px;font-size:13px;color:#1a1a1a;font-weight:400;">Đặng Văn Nam</div><div class="t" style="left:66.5px;width:400px;text-align:center;top:531.0px;font-size:13px;color:#1a1a1a;font-weight:400;letter-spacing:-0.5px">1988</div><div class="t" style="left:316.0px;top:531.0px;font-size:13px;color:#1a1a1a;font-weight:400;">Quy Nhơn</div><div class="t" style="left:24.0px;top:551.0px;font-size:13px;color:#1a1a1a;font-weight:400;">Đỗ Thị Phương</div><div class="t" style="left:66.5px;width:400px;text-align:center;top:551.0px;font-size:13px;color:#1a1a1a;font-weight:400;letter-spacing:-0.5px">1996</div><div class="t" style="left:316.0px;top:551.0px;font-size:13px;color:#1a1a1a;font-weight:400;">Cà Mau</div><div class="t" style="left:24.0px;top:571.0px;font-size:13px;color:#1a1a1a;font-weight:400;">Mai Thị Quỳnh</div><div class="t" style="left:66.5px;width:400px;text-align:center;top:571.0px;font-size:13px;color:#1a1a1a;font-weight:400;letter-spacing:-0.5px">1999</div><div class="t" style="left:316.0px;top:571.0px;font-size:13px;color:#1a1a1a;font-weight:400;">Nam Định</div><div class="t" style="left:24.0px;top:591.0px;font-size:13px;color:#1a1a1a;font-weight:400;">Hà Thị Hà</div><div class="t" style="left:66.5px;width:400px;text-align:center;top:591.0px;font-size:13px;color:#1a1a1a;font-weight:400;letter-spacing:-0.5px">1997</div><div class="t" style="left:316.0px;top:591.0px;font-size:13px;color:#1a1a1a;font-weight:400;">Hạ Long</div><div class="t" style="left:24.0px;top:611.0px;font-size:13px;color:#1a1a1a;font-weight:400;">Hoàng Văn Bình</div><div class="t" style="left:66.5px;width:400px;text-align:center;top:611.0px;font-size:13px;color:#1a1a1a;font-weight:400;letter-spacing:-0.5px">1989</div><div class="t" style="left:316.0px;top:611.0px;font-size:13px;color:#1a1a1a;font-weight:400;">Cần Thơ</div><div class="t" style="left:24.0px;top:631.0px;font-size:13px;color:#1a1a1a;font-weight:400;">Đinh Thị Thảo</div><div class="t" style="left:66.5px;width:400px;text-align:center;top:631.0px;font-size:13px;color:#1a1a1a;font-weight:400;letter-spacing:-0.5px">1994</div><div class="t" style="left:316.0px;top:631.0px;font-size:13px;color:#1a1a1a;font-weight:400;">Phan Thiết</div></div><div style="position:absolute;left:0px;top:634px;width:799px;height:6px;background:#fff"></div><div style="position:absolute;left:430px;top:634px;width:369px;height:6px;background:#e6e6e6;border-top:1px solid #9a9a9a;box-sizing:border-box"></div><div style="position:absolute;left:393px;top:6px;width:48px;height:36px;border:3px solid #e3000f;box-sizing:border-box;border-radius:2px"></div><div style="position:absolute;left:577px;top:62px;width:29px;height:29px;border:3px solid #e3000f;box-sizing:border-box;border-radius:2px"></div><div style="position:absolute;left:21px;top:285px;width:402px;height:355px;border:3px solid #e3000f;box-sizing:border-box"></div><svg style="position:absolute;left:0px;top:0px" width="799" height="640" viewBox="0 0 799 640"><line x1="295" y1="245.5" x2="566" y2="91.8" stroke="#e3000f" stroke-width="2.8" stroke-linecap="round"/><path d="M575.8 86.4L561.4 88.4L566.6 97.6Z" fill="#e3000f"/></svg><div style="position:absolute;left:580px;top:133px;width:215px;height:114px;background:#fff;border:1px solid #bfbfbf;box-sizing:border-box;box-shadow:1px 1px 2px rgba(0,0,0,0.15)"></div><div class="t" style="left:592.3px;top:142.1px;font-size:11.7px;color:#555;font-weight:700;">Remove Duplicates</div><div class="t" style="left:592.3px;top:163.7px;font-size:11.8px;color:#5f5f5f;font-weight:400;">Delete duplicate rows from a sheet.</div><div class="t" style="left:592.3px;top:192.5px;font-size:12.1px;color:#5f5f5f;font-weight:400;">You can pick which columns should</div><div class="t" style="left:592.3px;top:207.5px;font-size:12.1px;color:#5f5f5f;font-weight:400;">be checked for duplicate</div><div class="t" style="left:592.3px;top:222.5px;font-size:12.1px;color:#5f5f5f;font-weight:400;">information.</div>
</body></html>
